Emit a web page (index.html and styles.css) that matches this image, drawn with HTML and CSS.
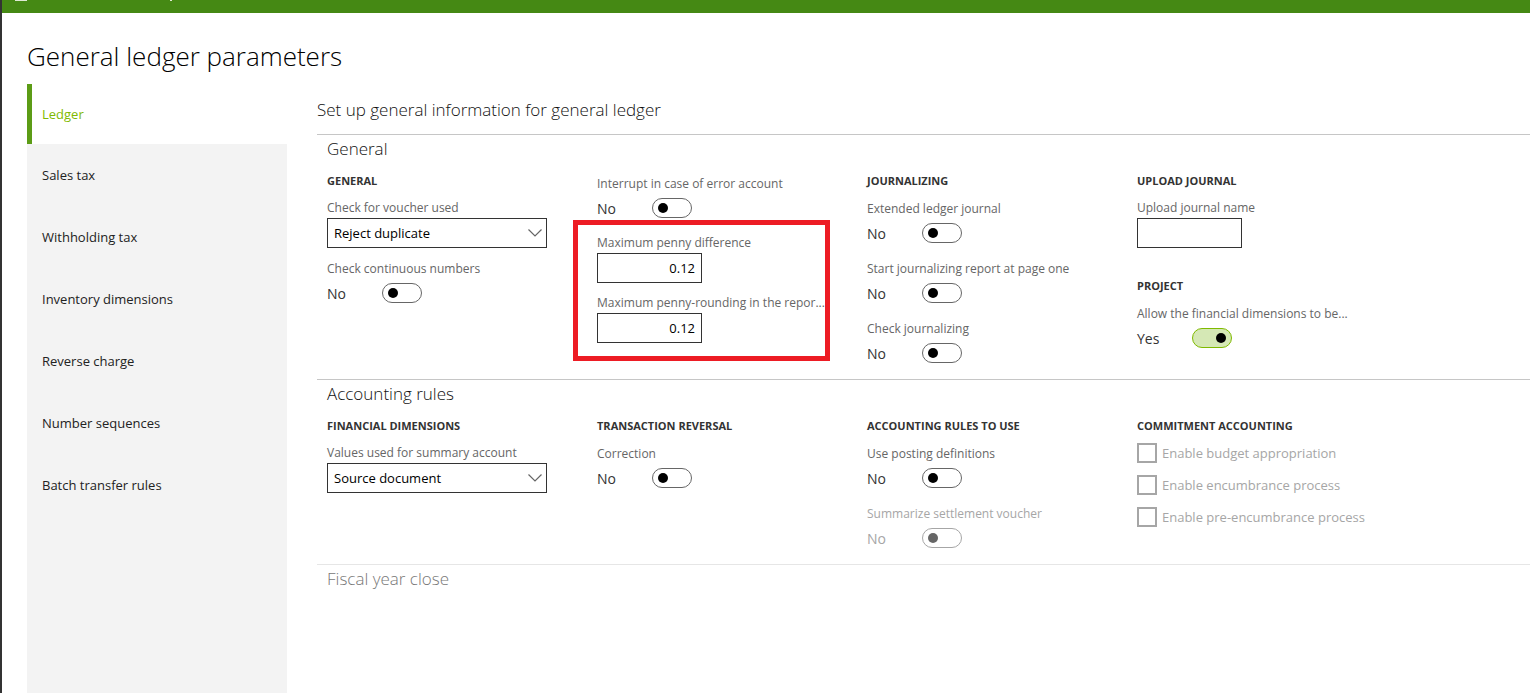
FILE: index.html
```html
<!DOCTYPE html>
<html lang="en">
<head>
    <meta charset="UTF-8">
    <meta name="viewport" content="width=device-width, initial-scale=1.0">
    <title>General ledger parameters</title>
    <link rel="stylesheet" href="styles.css">
</head>
<body>
    <header class="topbar">
        <svg width="160" height="2" viewBox="0 0 160 2" aria-hidden="true">
            <rect x="0" y="0" width="12" height="1" fill="#dfe9d4"/>
            <rect x="155" y="0" width="2" height="1" fill="#dfe9d4"/>
        </svg>
    </header>
    <h1 class="page-title">General ledger parameters</h1>
    <div class="layout">
        <nav class="sidebar">
            <a class="active" href="#">Ledger</a>
            <a href="#">Sales tax</a>
            <a href="#">Withholding tax</a>
            <a href="#">Inventory dimensions</a>
            <a href="#">Reverse charge</a>
            <a href="#">Number sequences</a>
            <a href="#">Batch transfer rules</a>
        </nav>
        <main class="content">
            <h2 class="intro">Set up general information for general ledger</h2>

            <section class="section">
                <h2>General</h2>
                <div class="columns">
                    <div class="column">
                        <h3>GENERAL</h3>
                        <div class="field">
                            <label for="voucher">Check for voucher used</label>
                            <div class="select">
                                <select id="voucher"><option>Reject duplicate</option></select>
                                <svg width="16" height="10" viewBox="0 0 16 10" aria-hidden="true"><path d="M1.5 1.5 L8 8 L14.5 1.5" fill="none" stroke="#666" stroke-width="1.2"/></svg>
                            </div>
                        </div>
                        <div class="field toggle">
                            <label for="continuous">Check continuous numbers</label>
                            <div class="row"><span>No</span><input type="checkbox" id="continuous"></div>
                        </div>
                    </div>
                    <div class="column">
                        <div class="field toggle">
                            <label for="interrupt">Interrupt in case of error account</label>
                            <div class="row"><span>No</span><input type="checkbox" id="interrupt"></div>
                        </div>
                        <div class="highlight">
                            <div class="field">
                                <label for="penny">Maximum penny difference</label>
                                <input class="text number" type="text" id="penny" value="0.12">
                            </div>
                            <div class="field">
                                <label for="rounding">Maximum penny-rounding in the repor...</label>
                                <input class="text number" type="text" id="rounding" value="0.12">
                            </div>
                        </div>
                    </div>
                    <div class="column">
                        <h3>JOURNALIZING</h3>
                        <div class="field toggle">
                            <label for="extended">Extended ledger journal</label>
                            <div class="row"><span>No</span><input type="checkbox" id="extended"></div>
                        </div>
                        <div class="field toggle">
                            <label for="pageone">Start journalizing report at page one</label>
                            <div class="row"><span>No</span><input type="checkbox" id="pageone"></div>
                        </div>
                        <div class="field toggle">
                            <label for="checkjour">Check journalizing</label>
                            <div class="row"><span>No</span><input type="checkbox" id="checkjour"></div>
                        </div>
                    </div>
                    <div class="column">
                        <h3>UPLOAD JOURNAL</h3>
                        <div class="field">
                            <label for="upload">Upload journal name</label>
                            <input class="text" type="text" id="upload">
                        </div>
                        <h3 class="next-group">PROJECT</h3>
                        <div class="field toggle">
                            <label for="allow">Allow the financial dimensions to be...</label>
                            <div class="row"><span>Yes</span><input type="checkbox" id="allow" checked></div>
                        </div>
                    </div>
                </div>
            </section>

            <section class="section">
                <h2>Accounting rules</h2>
                <div class="columns">
                    <div class="column">
                        <h3>FINANCIAL DIMENSIONS</h3>
                        <div class="field">
                            <label for="summary">Values used for summary account</label>
                            <div class="select">
                                <select id="summary"><option>Source document</option></select>
                                <svg width="16" height="10" viewBox="0 0 16 10" aria-hidden="true"><path d="M1.5 1.5 L8 8 L14.5 1.5" fill="none" stroke="#666" stroke-width="1.2"/></svg>
                            </div>
                        </div>
                    </div>
                    <div class="column">
                        <h3>TRANSACTION REVERSAL</h3>
                        <div class="field toggle">
                            <label for="correction">Correction</label>
                            <div class="row"><span>No</span><input type="checkbox" id="correction"></div>
                        </div>
                    </div>
                    <div class="column">
                        <h3>ACCOUNTING RULES TO USE</h3>
                        <div class="field toggle">
                            <label for="posting">Use posting definitions</label>
                            <div class="row"><span>No</span><input type="checkbox" id="posting"></div>
                        </div>
                        <div class="field toggle disabled">
                            <label for="settlement">Summarize settlement voucher</label>
                            <div class="row"><span>No</span><input type="checkbox" id="settlement" disabled></div>
                        </div>
                    </div>
                    <div class="column">
                        <h3>COMMITMENT ACCOUNTING</h3>
                        <div class="checks">
                            <label><input type="checkbox" disabled>Enable budget appropriation</label>
                            <label><input type="checkbox" disabled>Enable encumbrance process</label>
                            <label><input type="checkbox" disabled>Enable pre-encumbrance process</label>
                        </div>
                    </div>
                </div>
            </section>

            <section class="section faded">
                <h2>Fiscal year close</h2>
            </section>
        </main>
    </div>
</body>
</html>
```

FILE: styles.css
```css
* {
    box-sizing: border-box;
}
body {
    display: flex;
    flex-direction: column;
    min-height: 100vh;
    margin: 0;
    border-left: 2px solid #333;
    background: #fff;
    color: #333;
    font-family: "Segoe UI", "Open Sans", sans-serif;
    font-size: 13px;
}
h1, h2, h3 {
    margin: 0;
}
.topbar {
    height: 13px;
    padding-left: 13px;
    background: #458914;
}
.topbar svg {
    display: block;
}
.page-title {
    margin: 23px 25px 8px;
    color: #000;
    font-size: 26px;
    font-weight: 300;
    line-height: 40px;
}
.layout {
    display: flex;
    flex: 1;
    padding-left: 25px;
}
.sidebar {
    flex: 0 0 260px;
    background: #f3f3f3;
}
.sidebar a {
    display: block;
    padding-left: 15px;
    color: #222;
    line-height: 62px;
    text-decoration: none;
}
.sidebar a.active {
    padding-left: 10px;
    border-left: 5px solid #5c9c16;
    background: #fff;
    color: #7fba00;
    line-height: 60px;
}
.content {
    flex: 1;
    padding-left: 30px;
}
.intro {
    padding: 12px 0 10px;
    color: #111;
    font-size: 17px;
    font-weight: 300;
    line-height: 28px;
}
.section {
    padding: 0 10px 11px;
    border-top: 1px solid #c6c6c6;
}
.section h2 {
    margin-bottom: 10px;
    color: #111;
    font-size: 17px;
    font-weight: 300;
    line-height: 28px;
}
.columns {
    display: flex;
    gap: 50px;
}
.column {
    flex: 0 0 220px;
    min-width: 0;
    max-width: 220px;
}
.column h3 {
    margin-bottom: 9px;
    font-size: 11px;
    font-weight: 700;
    line-height: 16px;
}
.column .next-group {
    margin-top: 30px;
}
.field + .field,
.field + .highlight {
    margin-top: 10px;
}
.field label {
    display: block;
    color: #666;
    font-size: 12px;
    line-height: 20px;
    white-space: nowrap;
}
.toggle label {
    line-height: 22px;
}
.row {
    display: flex;
    height: 28px;
    padding-top: 3px;
}
.row span {
    width: 55px;
    font-size: 14px;
    line-height: 22px;
}
.row input {
    width: 40px;
    height: 20px;
    margin: 0;
    padding: 4px 5px;
    border: 1px solid #666;
    border-radius: 10px;
    background: #fff;
    appearance: none;
}
.row input::before {
    content: "";
    display: block;
    width: 10px;
    height: 10px;
    border-radius: 50%;
    background: #000;
}
.row input:checked {
    border-color: #7fba00;
    background: #d5e8b5;
}
.row input:checked::before {
    margin-left: auto;
}
.disabled .row input {
    border-color: #a6a6a6;
}
.disabled .row input::before {
    background: #666;
}
.disabled label,
.disabled span {
    color: #a6a6a6;
}
.text,
.select select {
    display: block;
    height: 30px;
    margin: 0;
    padding: 0 6px;
    border: 1px solid #333;
    border-radius: 0;
    background: #fff;
    color: #000;
    font: inherit;
}
.text {
    width: 105px;
}
.number {
    text-align: right;
}
.select {
    position: relative;
}
.select select {
    width: 100%;
    appearance: none;
}
.select svg {
    position: absolute;
    top: 10px;
    right: 4px;
    pointer-events: none;
}
/* red frame around the penny fields */
.highlight {
    position: relative;
}
.highlight::after {
    content: "";
    position: absolute;
    inset: -13px -13px -18px -24px;
    border: 5px solid #ed1c24;
    pointer-events: none;
}
.checks {
    display: flex;
    flex-direction: column;
    gap: 12px;
}
.checks label {
    display: flex;
    gap: 5px;
    color: #a6a6a6;
    line-height: 20px;
    white-space: nowrap;
}
.checks input {
    flex-shrink: 0;
    width: 20px;
    height: 20px;
    margin: 0;
    border: 2px solid #a6a6a6;
    appearance: none;
}
.faded {
    border-top-color: #e6e6e6;
}
.faded h2 {
    color: #777;
}
```
